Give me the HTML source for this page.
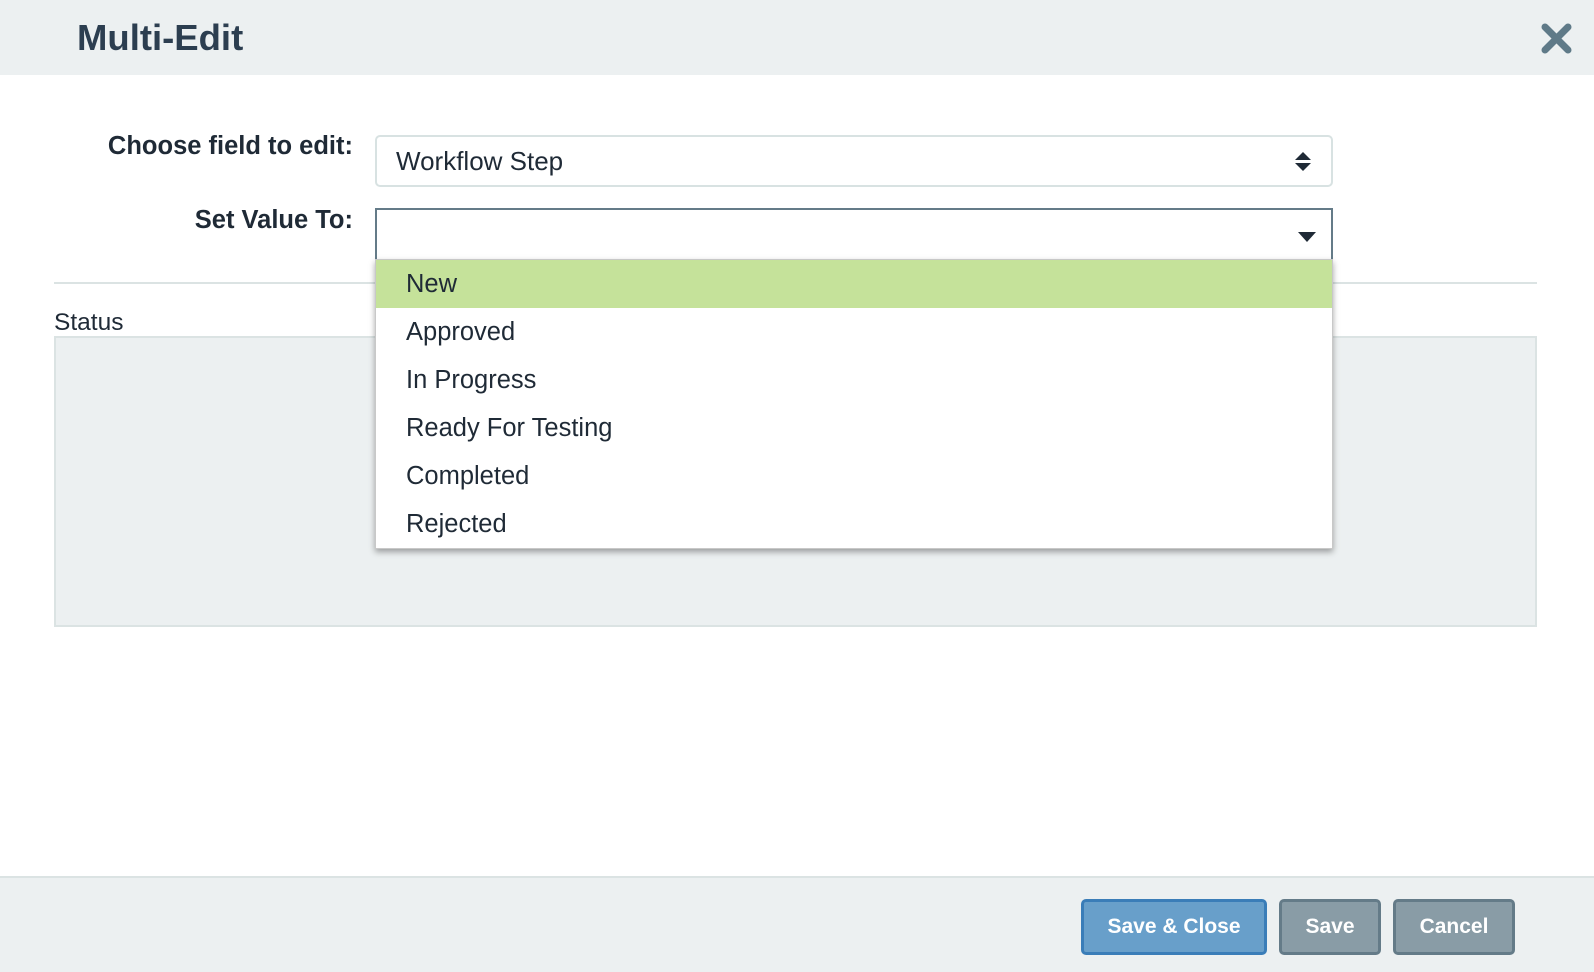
<!DOCTYPE html>
<html><head><style>
*{box-sizing:border-box;margin:0;padding:0}
body{width:1594px;height:972px;position:relative;background:#fff;font-family:"Liberation Sans",Arial,sans-serif;overflow:hidden;color:#1f2a36}
.hdr{position:absolute;left:0;top:0;width:1594px;height:75px;background:#ecf0f1}
.title{position:absolute;left:77px;top:17px;font-size:36.5px;font-weight:bold;color:#2c3e50}
.lbl{position:absolute;right:1241px;font-size:25.5px;font-weight:bold;color:#1f2a36;white-space:nowrap}
.sel{position:absolute;left:375px;width:958px;background:#fff}
.foot{position:absolute;left:0;top:876px;width:1594px;height:96px;background:#ecf0f1;border-top:2px solid #dbe3e3}
.btn{position:absolute;top:899px;height:56px;border-radius:5px;color:#fff;font-weight:bold;font-size:21px;text-align:center;line-height:50px;border:3px solid #647b88;background:#899ca6}
.item{height:48px;padding-left:30px;font-size:25.5px;line-height:48px;color:#1f2a36}
</style></head><body>
<div class="hdr"><div class="title">Multi-Edit</div>
<svg style="position:absolute;left:1541px;top:23px" width="31" height="31" viewBox="0 0 31 31"><path d="M4 4L27 27M27 4L4 27" stroke="#5f7a88" stroke-width="7" stroke-linecap="round"/></svg></div>
<div class="lbl" style="top:132px">Choose field to edit:</div>
<div class="lbl" style="top:206px">Set Value To:</div>
<div class="sel" style="top:135px;height:52px;border:2px solid #d8e2e2;border-radius:5px;font-size:26px;padding-left:19px;line-height:48px">Workflow Step
<svg style="position:absolute;right:20px;top:15px" width="16" height="20"><path d="M8 0L16 8H0Z M0 11H16L8 19Z" fill="#1f2a36"/></svg></div>
<div class="sel" style="top:208px;height:51px;border:2px solid #647b88;border-bottom:none">
<svg style="position:absolute;right:15px;top:22px" width="18" height="10"><path d="M0 0H18L9 10Z" fill="#1f2a36"/></svg></div>
<div style="position:absolute;left:54px;top:282px;width:1483px;height:2px;background:#dbe3e3"></div>
<div style="position:absolute;left:54px;top:309px;font-size:24.5px;color:#1f2a36">Status</div>
<div style="position:absolute;left:54px;top:336px;width:1483px;height:291px;background:#ecf0f1;border:2px solid #dbe3e3"></div>
<div class="sel" style="top:259px;height:290px;border:1px solid #c8c8c8;box-shadow:0 3px 6px rgba(0,0,0,.35)">
<div class="item" style="background:#c5e29a">New</div>
<div class="item">Approved</div>
<div class="item">In Progress</div>
<div class="item">Ready For Testing</div>
<div class="item">Completed</div>
<div class="item">Rejected</div>
</div>
<div class="foot"></div>
<div class="btn" style="left:1081px;width:186px;background:#689fca;border-color:#3a7db8">Save &amp; Close</div>
<div class="btn" style="left:1279px;width:102px">Save</div>
<div class="btn" style="left:1393px;width:122px">Cancel</div>
</body></html>
